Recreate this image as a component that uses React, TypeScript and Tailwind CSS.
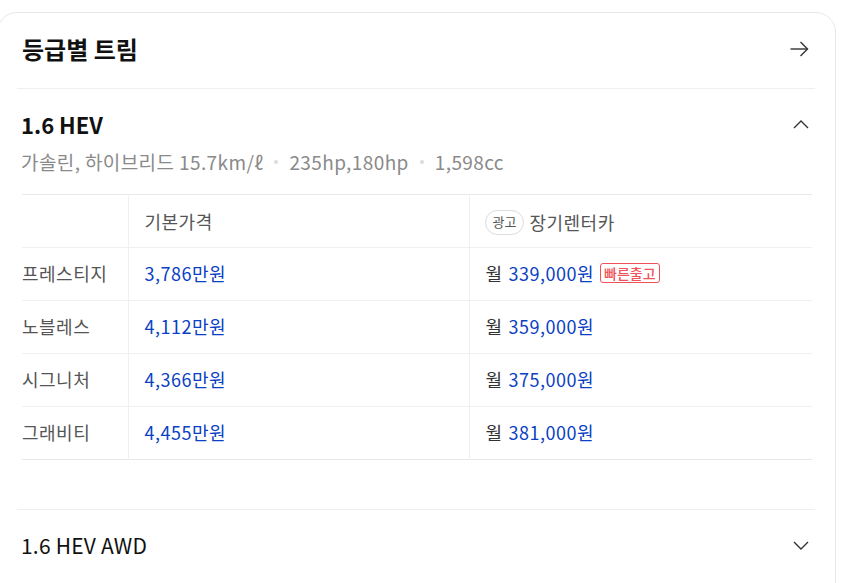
const FONT = "font-['Noto_Sans_CJK_KR','Noto_Sans',sans-serif]";

const rows = [
  { name: "프레스티지", price: "3,786", rent: "339,000", fast: true },
  { name: "노블레스", price: "4,112", rent: "359,000" },
  { name: "시그니처", price: "4,366", rent: "375,000" },
  { name: "그래비티", price: "4,455", rent: "381,000" },
];

function Chevron({ up }: { up?: boolean }) {
  return (
    <svg width="16" height="10" viewBox="0 0 16 10" fill="none">
      <polyline
        points={up ? "1,9 8,2 15,9" : "1,1 8,8 15,1"}
        stroke="#333"
        strokeWidth="1.4"
      />
    </svg>
  );
}

function Dot() {
  return <span className="mx-[11px] inline-block h-[4px] w-[4px] rounded-full bg-[#dcdcdc]" />;
}

export default function App() {
  return (
    <div className={`h-screen overflow-hidden bg-white pt-[12px] ${FONT}`}>
      <div className="ml-[-3px] w-[839px] rounded-[20px] border border-[#e8e8e8] bg-white pl-[19px] pr-[20px]">
        {/* Header */}
        <div className="flex h-[76px] items-center justify-between border-b border-[#efefef] pb-[4px] pl-[5px] pr-[6px]">
          <h2 className="text-[24px] font-bold text-[#111]">등급별 트림</h2>
          <svg width="20" height="20" viewBox="0 0 20 20" fill="none">
            <line x1="1.5" y1="10" x2="18.5" y2="10" stroke="#333" strokeWidth="1.4" />
            <polyline points="11.5,3 18.5,10 11.5,17" stroke="#333" strokeWidth="1.4" />
          </svg>
        </div>

        {/* 1.6 HEV */}
        <div className="border-b border-[#efefef] pb-[49px] pt-[20px]">
          <div className="flex items-center justify-between pl-[4px] pr-[6px]">
            <h3 className="text-[22px] font-bold leading-[30px] text-[#111]">1.6 HEV</h3>
            <Chevron up />
          </div>
          <div className="mt-[10px] flex items-center pl-[4px] text-[19px] leading-[26px] tracking-[0.4px] text-[#8a8a8a]">
            <span>가솔린, 하이브리드 15.7km/ℓ</span>
            <Dot />
            <span>235hp,180hp</span>
            <Dot />
            <span>1,598cc</span>
          </div>

          <table className="ml-[5px] mt-[19px] w-[790px] border-collapse border-y border-[#e8e8e8] text-[18px] tracking-[0.5px]">
            <colgroup>
              <col className="w-[106px]" />
              <col className="w-[341px]" />
              <col />
            </colgroup>
            <thead>
              <tr className="h-[53px] border-b border-[#f0f0f0]">
                <th className="border-r border-[#f0f0f0]" />
                <th className="border-r border-[#f0f0f0] pl-[16px] text-left font-normal text-[#555]">기본가격</th>
                <th className="pl-[15px] text-left font-normal text-[#555]">
                  <span className="inline-flex items-center">
                    <span className="mr-[5px] inline-flex h-[25px] items-center rounded-full border border-[#dcdcdc] px-[7px] text-[13px] tracking-normal text-[#555]">
                      광고
                    </span>
                    장기렌터카
                  </span>
                </th>
              </tr>
            </thead>
            <tbody>
              {rows.map((r, i) => (
                <tr
                  key={r.name}
                  className={`h-[53px] ${i < rows.length - 1 ? "border-b border-[#f0f0f0]" : ""}`}
                >
                  <td className="border-r border-[#f0f0f0] pb-[2px] text-[#555]">{r.name}</td>
                  <td className="border-r border-[#f0f0f0] pb-[2px] pl-[16px] text-[#0b3fc4]">{r.price}만원</td>
                  <td className="pb-[2px] pl-[16px]">
                    <span className="inline-flex items-center">
                      <span className="text-[#333]">월</span>
                      <span className="ml-[6px] text-[#0b3fc4]">{r.rent}원</span>
                      {r.fast ? (
                        <span className="ml-[6px] inline-flex h-[20px] items-center rounded-[3px] border border-[#f0525a] px-[3px] text-[14px] font-medium tracking-normal text-[#f0525a]">
                          빠른출고
                        </span>
                      ) : null}
                    </span>
                  </td>
                </tr>
              ))}
            </tbody>
          </table>
        </div>

        {/* 1.6 HEV AWD */}
        <div className="flex h-[74px] items-center justify-between pb-[2px] pl-[4px] pr-[6px]">
          <h3 className="text-[21px] tracking-[0.2px] text-[#111]">1.6 HEV AWD</h3>
          <Chevron />
        </div>
        <div className="h-[40px]" />
      </div>
    </div>
  );
}
